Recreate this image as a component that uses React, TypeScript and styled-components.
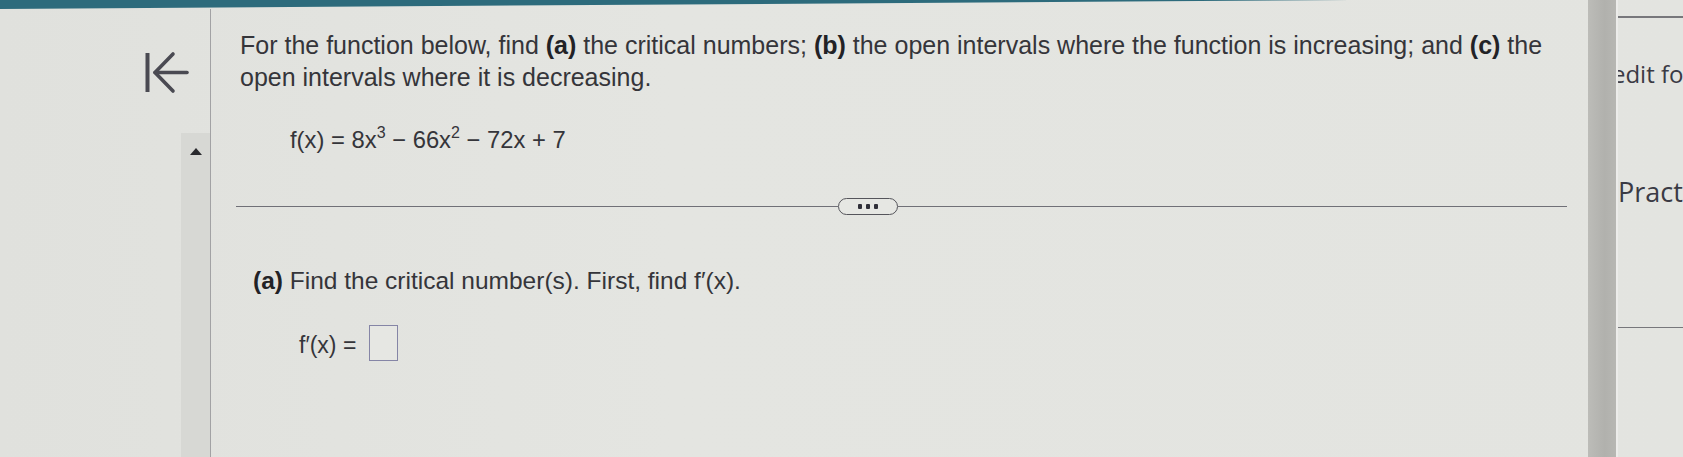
import React from "react";
import styled, { createGlobalStyle } from "styled-components";

const GlobalStyle = createGlobalStyle`
  html, body {
    margin: 0;
    padding: 0;
    background: #e2e3df;
  }
  body {
    font-family: "Liberation Sans", Arial, sans-serif;
    color: #35353a;
  }
`;

const Page = styled.div`
  width: 1683px;
  height: 457px;
  display: flex;
  overflow: hidden;
  background: linear-gradient(90deg, #e0e1dd 0%, #e4e5e1 40%, #e3e4e0 100%);
`;

const Workspace = styled.div`
  flex: 1;
  min-width: 0;
  display: flex;
  flex-direction: column;
`;

const TopBar = styled.div`
  height: 9px;
  flex: 0 0 9px;
  background: #2d6b7c;
  clip-path: polygon(0 0, 1350px 0, 0 100%);
`;

const Content = styled.div`
  flex: 1;
  display: flex;
  min-height: 0;
`;

const Sidebar = styled.aside`
  width: 210px;
  flex: 0 0 210px;
  display: flex;
  flex-direction: column;
  border-right: 1.5px solid #a2a2a4;
`;

const BackButton = styled.button`
  margin: 42px 0 0 143px;
  padding: 0;
  width: 46px;
  height: 44px;
  border: none;
  background: transparent;
  display: flex;
  cursor: pointer;
`;

const ScrollTrack = styled.div`
  align-self: flex-end;
  width: 29px;
  flex: 1;
  margin-top: 38px;
  background: #d7d8d4;
  display: flex;
  justify-content: center;
  padding-top: 15px;
`;

const UpTriangle = styled.div`
  width: 0;
  height: 0;
  border-left: 6px solid transparent;
  border-right: 6px solid transparent;
  border-bottom: 7px solid #2a2a2e;
`;

const Main = styled.main`
  flex: 1;
  min-width: 0;
  padding: 20px 21px 0 29px;
  display: flex;
  flex-direction: column;
`;

const Question = styled.p`
  margin: 0;
  font-size: 25px;
  line-height: 32px;
  letter-spacing: 0;
  white-space: nowrap;
`;

const Bold = styled.b`
  font-weight: 700;
  color: #222226;
`;

const Formula = styled.div`
  margin: 31px 0 0 50px;
  font-size: 23.8px;
  line-height: 32px;
  white-space: nowrap;
`;

const Sup = styled.sup`
  font-size: 16px;
  line-height: 0;
  vertical-align: 10px;
`;

const DividerRow = styled.div`
  margin: 42px 0 0 -4px;
  display: flex;
  align-items: center;
  height: 17px;
`;

const Rule = styled.div<{ $w?: number }>`
  height: 1.5px;
  background: #707077;
  flex: ${(p) => (p.$w ? `0 0 ${p.$w}px` : "1")};
`;

const MorePill = styled.button`
  width: 60px;
  height: 17px;
  padding: 0;
  border: 1.5px solid #55555b;
  border-radius: 9px;
  background: #e6e7e3;
  display: flex;
  align-items: center;
  justify-content: center;
  gap: 4px;
`;

const Dot = styled.span`
  width: 4px;
  height: 5px;
  border-radius: 1px;
  background: #2f2f38;
`;

const PartLabel = styled.p`
  margin: 50px 0 0 13px;
  font-size: 24.5px;
  line-height: 32px;
  white-space: nowrap;
`;

const AnswerRow = styled.div`
  margin: 28px 0 0 59px;
  display: flex;
  align-items: flex-start;
  gap: 13px;
  font-size: 23px;
`;

const AnswerLabel = styled.span`
  margin-top: 4px;
  line-height: 32px;
`;

const AnswerBox = styled.div`
  width: 29px;
  height: 36px;
  box-sizing: border-box;
  border: 1.5px solid #8585a6;
  background: #e6e7e3;
`;

const Splitter = styled.div`
  width: 28px;
  flex: 0 0 28px;
  background: linear-gradient(90deg, #bcbcb8 0%, #b1b1ad 60%, #b7b7b3 100%);
  border-right: 2px solid #ececea;
`;

const RightPanel = styled.aside`
  flex: 0 0 65px;
  width: 65px;
  overflow: hidden;
  display: flex;
  flex-direction: column;
  font-family: "Open Sans", "Noto Sans", sans-serif;
  color: #3a3a44;
`;

const PanelRule = styled.div<{ $top: number }>`
  margin-top: ${(p) => p.$top}px;
  height: 1.5px;
  flex: 0 0 1.5px;
  background: #77777b;
`;

const PanelText = styled.div<{ $top: number; $shift?: number; $size: number }>`
  margin-top: ${(p) => p.$top}px;
  margin-left: ${(p) => p.$shift ?? 0}px;
  font-size: ${(p) => p.$size}px;
  line-height: 30px;
  white-space: nowrap;
`;

function BackIcon() {
  return (
    <svg width="46" height="44" viewBox="0 0 46 44" fill="none">
      <line x1="4.5" y1="2" x2="4.5" y2="41" stroke="#4a4a52" strokeWidth="4" />
      <polyline
        points="30,3 12,21.5 30,40"
        stroke="#4a4a52"
        strokeWidth="3.6"
        strokeLinecap="round"
        strokeLinejoin="round"
      />
      <line x1="12" y1="21.5" x2="44" y2="21.5" stroke="#4a4a52" strokeWidth="3.6" strokeLinecap="round" />
    </svg>
  );
}

export default function App() {
  return (
    <>
      <GlobalStyle />
      <Page>
        <Workspace>
          <TopBar />
          <Content>
            <Sidebar>
              <BackButton aria-label="Back">
                <BackIcon />
              </BackButton>
              <ScrollTrack>
                <UpTriangle />
              </ScrollTrack>
            </Sidebar>
            <Main>
              <Question>
                For the function below, find <Bold>(a)</Bold> the critical numbers; <Bold>(b)</Bold> the open
                intervals where the function is increasing; and <Bold>(c)</Bold> the
                <br />
                open intervals where it is decreasing.
              </Question>
              <Formula>
                f(x) = 8x<Sup>3</Sup> − 66x<Sup>2</Sup> − 72x + 7
              </Formula>
              <DividerRow>
                <Rule $w={602} />
                <MorePill aria-label="More">
                  <Dot />
                  <Dot />
                  <Dot />
                </MorePill>
                <Rule />
              </DividerRow>
              <PartLabel>
                <Bold>(a)</Bold> Find the critical number(s). First, find f′(x).
              </PartLabel>
              <AnswerRow>
                <AnswerLabel>f′(x) =</AnswerLabel>
                <AnswerBox />
              </AnswerRow>
            </Main>
          </Content>
        </Workspace>
        <Splitter />
        <RightPanel>
          <PanelRule $top={16} />
          <PanelText $top={41} $shift={-31} $size={24}>
            Credit for
          </PanelText>
          <PanelText $top={88} $size={27}>
            Practice
          </PanelText>
          <PanelRule $top={120} />
        </RightPanel>
      </Page>
    </>
  );
}
